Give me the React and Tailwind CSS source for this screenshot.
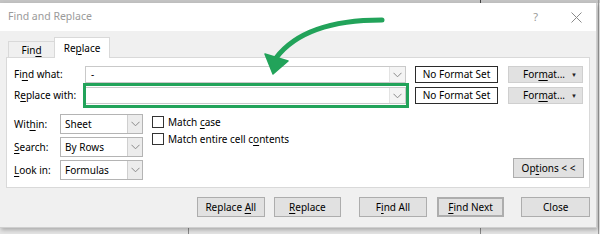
import React from "react";

const font = { fontFamily: '"Noto Sans", "Open Sans", Arial, sans-serif' };

function U({ children }) {
  return <span className="underline underline-offset-2 decoration-1">{children}</span>;
}

function Chevron() {
  return (
    <svg width="9" height="6" viewBox="0 0 9 6" className="block">
      <path d="M0.5 0.8 L4.5 4.8 L8.5 0.8" fill="none" stroke="#8a8a8a" strokeWidth="1" />
    </svg>
  );
}

function Combo({ value, className = "" }) {
  return (
    <div className={"flex h-[17px] bg-white border border-[#c9c9c9] " + className}>
      <div className="flex-1 pl-[5px] text-[10px] leading-[15px] text-black">{value}</div>
      <div className="w-[16px] flex items-center justify-center border-l border-[#e3e3e3] bg-[#f4f4f4]">
        <Chevron />
      </div>
    </div>
  );
}

function Select({ value }) {
  return (
    <div className="flex w-[83px] h-[20px] bg-white border border-[#b4b4b4]">
      <div className="flex-1 pl-[4px] text-[10px] leading-[18px] text-black">{value}</div>
      <div className="w-[15px] flex items-center justify-center border-l border-[#cfcfcf] bg-[#ececec]">
        <Chevron />
      </div>
    </div>
  );
}

function Btn({ children, className = "" }) {
  return (
    <div
      className={
        "h-[20px] flex items-center justify-center bg-[#e1e1e1] border border-[#adadad] text-[10px] text-black " +
        className
      }
    >
      <span>{children}</span>
    </div>
  );
}

function NoFormat() {
  return (
    <div className="w-[83px] h-[17px] flex items-center justify-center border border-[#2b2b2b] bg-white text-[10px] text-black">
      No Format Set
    </div>
  );
}

function FormatBtn() {
  return (
    <div className="w-[75px] h-[17px] flex items-center bg-[#e1e1e1] border border-[#cfcfcf] text-[10px] text-black">
      <span className="flex-1 text-center pl-[8px]">
        For<U>m</U>at...
      </span>
      <span className="w-[11px] text-[6px] leading-none text-[#222]">▼</span>
    </div>
  );
}

function Check({ children }) {
  return (
    <div className="flex items-center h-[14px] gap-[4px]">
      <div className="w-[12px] h-[12px] border border-[#333] bg-white" />
      <span className="text-[10px] text-black leading-none">{children}</span>
    </div>
  );
}

export default function App() {
  return (
    <div className="relative w-[600px] h-[234px] bg-[#e4e4e4] overflow-hidden" style={font}>
      {/* background lines behind the dialog */}
      <div className="absolute left-0 top-0 w-[600px] h-[3px] bg-[#c4c4c4]" />
      <div className="absolute left-[480px] top-0 w-[1px] h-[3px] bg-[#444]" />
      <div className="absolute left-[188px] top-[228px] w-[1px] h-[6px] bg-[#888]" />
      <div className="absolute left-[480px] top-[228px] w-[1px] h-[6px] bg-[#888]" />
      <div className="absolute left-[598px] top-0 w-[1px] h-[234px] bg-[#9a9a9a]" />

      {/* dialog window */}
      <div className="absolute left-0 top-[3px] w-[597px] h-[225px] flex flex-col bg-[#f0f0f0] border-r border-b border-[#cfcfcf] shadow-[1px_2px_4px_rgba(0,0,0,0.25)]">
        {/* title bar */}
        <div className="h-[28px] bg-white flex items-center pl-[8px] pr-[14px] shrink-0">
          <span className="text-[10.5px] text-[#9a9a9a]">Find and Replace</span>
          <span className="ml-auto text-[11px] text-[#9a9a9a] mr-[33px]">?</span>
          <svg width="11" height="11" viewBox="0 0 11 11">
            <path d="M0.5 0.5 L10.5 10.5 M10.5 0.5 L0.5 10.5" stroke="#8a8a8a" strokeWidth="1" />
          </svg>
        </div>

        <div className="flex-1 flex flex-col px-[6px]">
          {/* tabs */}
          <div className="flex items-end h-[26px] pl-[2px] shrink-0">
            <div className="w-[46px] h-[17px] flex items-center justify-center text-[10px] text-black border-t border-l border-[#d9d9d9] -mb-px">
              <span>
                Fin<U>d</U>
              </span>
            </div>
            <div className="relative z-10 w-[56px] h-[21px] flex items-center justify-center text-[10px] text-black bg-white border border-b-0 border-[#d9d9d9] -mb-px">
              <span>
                Re<U>p</U>lace
              </span>
            </div>
          </div>

          {/* panel */}
          <div className="h-[131px] w-[584px] bg-white border border-[#d9d9d9] flex flex-col pt-[8px] pl-[7px] pr-[5px] shrink-0">
            <div className="flex items-center h-[17px]">
              <div className="w-[71px] text-[10px] text-black">
                Fi<U>n</U>d what:
              </div>
              <Combo value="-" className="w-[321px]" />
              <div className="ml-[9px]">
                <NoFormat />
              </div>
              <div className="ml-[10px]">
                <FormatBtn />
              </div>
            </div>
            <div className="flex items-center h-[17px] mt-[4px]">
              <div className="w-[71px] text-[10px] text-black">
                R<U>e</U>place with:
              </div>
              <div className="relative">
                <Combo value="" className="w-[321px]" />
                <div className="absolute -left-[2px] -right-[3px] -top-[4px] -bottom-[4px] border-[3px] border-[#22a35a]" />
              </div>
              <div className="ml-[9px]">
                <NoFormat />
              </div>
              <div className="ml-[10px]">
                <FormatBtn />
              </div>
            </div>

            <div className="flex mt-[10px]">
              <div className="flex flex-col gap-[3px]">
                <div className="flex items-center">
                  <div className="w-[46px] text-[10px] text-black">
                    Wit<U>h</U>in:
                  </div>
                  <Select value="Sheet" />
                </div>
                <div className="flex items-center">
                  <div className="w-[46px] text-[10px] text-black">
                    <U>S</U>earch:
                  </div>
                  <Select value="By Rows" />
                </div>
                <div className="flex items-center">
                  <div className="w-[46px] text-[10px] text-black">
                    <U>L</U>ook in:
                  </div>
                  <Select value="Formulas" />
                </div>
              </div>
              <div className="ml-[9px] pt-[1px] flex flex-col gap-[3px]">
                <Check>
                  Match <U>c</U>ase
                </Check>
                <Check>
                  Match entire cell c<U>o</U>ntents
                </Check>
              </div>
              <div className="flex-1" />
              <Btn className="w-[71px] self-end mb-[2px]">
                Op<U>t</U>ions &lt; &lt;
              </Btn>
            </div>
          </div>

          {/* bottom buttons */}
          <div className="flex mt-[9px] pl-[191px]">
            <Btn className="w-[68px]">
              Replace <U>A</U>ll
            </Btn>
            <Btn className="w-[68px] ml-[9px]">
              <U>R</U>eplace
            </Btn>
            <Btn className="w-[68px] ml-[18px]">
              F<U>i</U>nd All
            </Btn>
            <Btn className="w-[68px] ml-[10px] border-2 border-[#0078d7]">
              <U>F</U>ind Next
            </Btn>
            <Btn className="w-[69px] ml-[17px]">Close</Btn>
          </div>
        </div>
      </div>

      {/* green annotation arrow */}
      <svg className="absolute left-0 top-0 pointer-events-none" width="600" height="234">
        <path d="M382 20 C 335 20 297 30 276 58" fill="none" stroke="#22a35a" strokeWidth="5" strokeLinecap="round" />
        <polygon points="265,54 288,61 273,74" fill="#22a35a" stroke="#22a35a" strokeWidth="1.5" strokeLinejoin="round" />
      </svg>
    </div>
  );
}
